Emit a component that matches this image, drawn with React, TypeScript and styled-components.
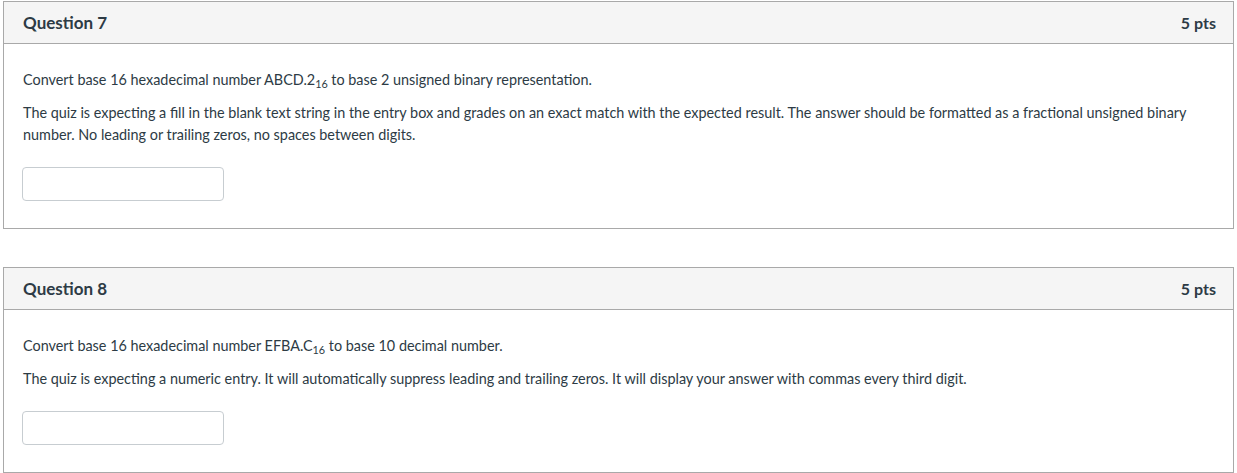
import React from "react";
import styled, { createGlobalStyle } from "styled-components";

const Global = createGlobalStyle`
  html, body { margin: 0; padding: 0; background: #fff; }
  body {
    font-family: Lato, "Noto Sans", "Liberation Sans", sans-serif;
    color: #2d3b45;
  }
`;

const Page = styled.div`
  padding: 1px 3px 0 3px;
  display: flex;
  flex-direction: column;
  gap: 38px;
`;

const Card = styled.section`
  border: 1px solid #a9a9a9;
  background: #fff;
`;

const Header = styled.header`
  display: flex;
  justify-content: space-between;
  align-items: center;
  height: 42px;
  padding: 0 17px 1px 19px;
  box-sizing: border-box;
  background: #f5f5f5;
  border-bottom: 1px solid #a9a9a9;
`;

const Title = styled.h2`
  margin: 0;
  font-size: 17px;
  font-weight: 700;
  color: #2d3b45;
`;

const Points = styled.span`
  font-size: 16px;
  font-weight: 700;
  color: #2d3b45;
`;

const Body = styled.div`
  padding: 25px 20px 27px 19px;
`;

const Para = styled.p`
  margin: 0 0 11px 0;
  font-size: 14.4px;
  line-height: 22px;
`;

const Sub = styled.sub`
  font-size: 10.8px;
  line-height: 0;
  vertical-align: -3px;
`;

const Answer = styled.input`
  display: block;
  margin: 21px 0 0 -1px;
  width: 202px;
  height: 34px;
  box-sizing: border-box;
  border: 1px solid #c7cdd1;
  border-radius: 4px;
  background: #fff;
  outline: none;
`;

type Q = { n: number; pts: string; paras: React.ReactNode[] };

const questions: Q[] = [
  {
    n: 7,
    pts: "5 pts",
    paras: [
      <>Convert base 16 hexadecimal number ABCD.2<Sub>16</Sub> to base 2 unsigned binary representation.</>,
      <>The quiz is expecting a fill in the blank text string in the entry box and grades on an exact match with the expected result. The answer should be formatted as a fractional unsigned binary number. No leading or trailing zeros, no spaces between digits.</>,
    ],
  },
  {
    n: 8,
    pts: "5 pts",
    paras: [
      <>Convert base 16 hexadecimal number EFBA.C<Sub>16</Sub> to base 10 decimal number.</>,
      <>The quiz is expecting a numeric entry. It will automatically suppress leading and trailing zeros. It will display your answer with commas every third digit.</>,
    ],
  },
];

export default function App() {
  return (
    <>
      <Global />
      <Page>
        {questions.map((q) => (
          <Card key={q.n}>
            <Header>
              <Title>Question {q.n}</Title>
              <Points>{q.pts}</Points>
            </Header>
            <Body>
              {q.paras.map((p, i) => (
                <Para key={i}>{p}</Para>
              ))}
              <Answer type="text" aria-label={`Answer for question ${q.n}`} />
            </Body>
          </Card>
        ))}
      </Page>
    </>
  );
}
